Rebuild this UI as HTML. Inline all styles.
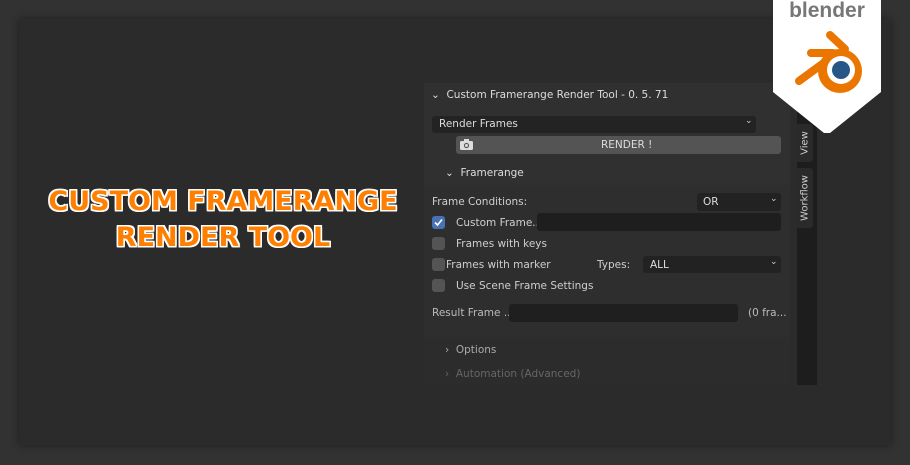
<!DOCTYPE html>
<html><head><meta charset="utf-8"><style>
*{margin:0;padding:0;box-sizing:border-box}
body{width:910px;height:465px;background:#323232;position:relative;overflow:hidden;font-family:"DejaVu Sans","Liberation Sans",sans-serif;font-size:10.5px;color:#cfcfcf}
.a{position:absolute}
#inner{left:19px;top:19px;width:872px;height:426px;background:#2b2b2b;box-shadow:0 0 8px rgba(0,0,0,.4)}
.title{font-family:"DejaVu Sans",sans-serif;font-weight:bold;font-size:27px;color:#ff8000;text-align:center;width:400px;left:23px;line-height:36px;
text-shadow:-1.5px -1.5px 0 #fff,1.5px -1.5px 0 #fff,-1.5px 1.5px 0 #fff,1.5px 1.5px 0 #fff,0 1.5px 0 #fff,0 -1.5px 0 #fff,1.5px 0 0 #fff,-1.5px 0 0 #fff}
#panel{left:424px;top:83px;width:366px;height:302px;background:#303030}
.field{background:#1e1e1e;border-radius:3px}
.cb{width:13px;height:13px;border-radius:3px;background:#545454}
.t{white-space:nowrap}
</style></head><body>
<div class="a" id="inner"></div>
<div class="a title" style="top:184px">CUSTOM FRAMERANGE</div>
<div class="a title" style="top:220px">RENDER TOOL</div>

<div class="a" id="panel"></div>
<div class="a" style="left:424px;top:185px;width:366px;height:152px;background:#2e2e2e"></div>
<div class="a" style="left:424px;top:337px;width:366px;height:48px;background:#2c2c2c"></div>
<div class="a t" style="left:431px;top:89px;color:#ddd">⌄&nbsp; Custom Framerange Render Tool - 0. 5. 71</div>
<div class="a field" style="left:432px;top:116px;width:324px;height:17px;background:#232323"></div>
<div class="a t" style="left:439px;top:118px;color:#ddd">Render Frames</div>
<div class="a t" style="left:745px;top:116px;color:#ccc;font-size:9px">⌄</div>
<div class="a" style="left:456px;top:136px;width:325px;height:18px;background:#545454;border-radius:3px"></div>
<svg class="a" style="left:460px;top:139px" width="13" height="11" viewBox="0 0 13 11"><rect x="0" y="2" width="13" height="9" rx="1.5" fill="#ddd"/><rect x="4" y="0" width="5" height="3" fill="#ddd"/><circle cx="6.5" cy="6.5" r="2.6" fill="#545454"/><circle cx="6.5" cy="6.5" r="1.5" fill="#ddd"/></svg>
<div class="a t" style="left:601px;top:139px;color:#ddd">RENDER !</div>
<div class="a t" style="left:445px;top:167px;color:#ddd">⌄&nbsp; Framerange</div>
<div class="a t" style="left:432px;top:196px">Frame Conditions:</div>
<div class="a field" style="left:697px;top:193px;width:84px;height:18px;background:#222"></div>
<div class="a t" style="left:703px;top:196px;color:#ddd">OR</div>
<div class="a t" style="left:770px;top:194px;font-size:9px">⌄</div>
<div class="a cb" style="left:432px;top:216px;background:#4772b3"></div>
<svg class="a" style="left:433px;top:217px" width="11" height="11"><path d="M2 5.5 L4.5 8 L9 2.5" stroke="#fff" stroke-width="1.6" fill="none"/></svg>
<div class="a t" style="left:456px;top:217px">Custom Frame...</div>
<div class="a field" style="left:537px;top:213px;width:244px;height:18px"></div>
<div class="a cb" style="left:432px;top:237px"></div>
<div class="a t" style="left:456px;top:238px">Frames with keys</div>
<div class="a cb" style="left:432px;top:258px"></div>
<div class="a t" style="left:446px;top:259px">Frames with marker</div>
<div class="a t" style="left:597px;top:259px">Types:</div>
<div class="a field" style="left:643px;top:256px;width:138px;height:17px;background:#222"></div>
<div class="a t" style="left:650px;top:259px;color:#ddd">ALL</div>
<div class="a t" style="left:770px;top:257px;font-size:9px">⌄</div>
<div class="a cb" style="left:432px;top:279px"></div>
<div class="a t" style="left:456px;top:280px">Use Scene Frame Settings</div>
<div class="a t" style="left:432px;top:307px;color:#bbb">Result Frame ...</div>
<div class="a field" style="left:509px;top:304px;width:229px;height:18px;background:#1f1f1f"></div>
<div class="a t" style="left:748px;top:307px;color:#bbb">(0 fra...</div>
<div class="a t" style="left:445px;top:344px;color:#aaa">›&nbsp; Options</div>
<div class="a t" style="left:445px;top:368px;color:#666">›&nbsp; Automation (Advanced)</div>

<div class="a" style="left:797px;top:110px;width:20px;height:275px;background:#1d1d1d"></div>
<div class="a" style="left:797px;top:124px;width:16px;height:38px;background:#2a2a2a;border-radius:0 3px 3px 0"></div>
<div class="a t" style="left:805px;top:143px;transform:translate(-50%,-50%) rotate(-90deg);font-size:10px;color:#ccc">View</div>
<div class="a" style="left:797px;top:168px;width:16px;height:60px;background:#2a2a2a;border-radius:0 3px 3px 0"></div>
<div class="a t" style="left:805px;top:198px;transform:translate(-50%,-50%) rotate(-90deg);font-size:10px;color:#ccc">Workflow</div>

<svg class="a" style="left:773px;top:0" width="108" height="134" viewBox="0 0 108 134">
<path d="M0 0 H108 V92 L57 133 L51 133 L0 92 Z" fill="#fff"/>
<text x="54" y="17" text-anchor="middle" font-family="Liberation Sans,sans-serif" font-weight="bold" font-size="21" fill="#777">blender</text>
<g stroke="#ea7600" stroke-width="8" stroke-linecap="round">
<line x1="38" y1="53" x2="60" y2="53"/>
<line x1="57" y1="35" x2="72" y2="49"/>
<line x1="26" y1="81" x2="52" y2="62"/>
</g>
<circle cx="67" cy="71" r="22" fill="#ea7600"/>
<circle cx="68" cy="70" r="14" fill="#fff"/>
<circle cx="68" cy="70" r="9" fill="#265787"/>
</svg>
</body></html>
